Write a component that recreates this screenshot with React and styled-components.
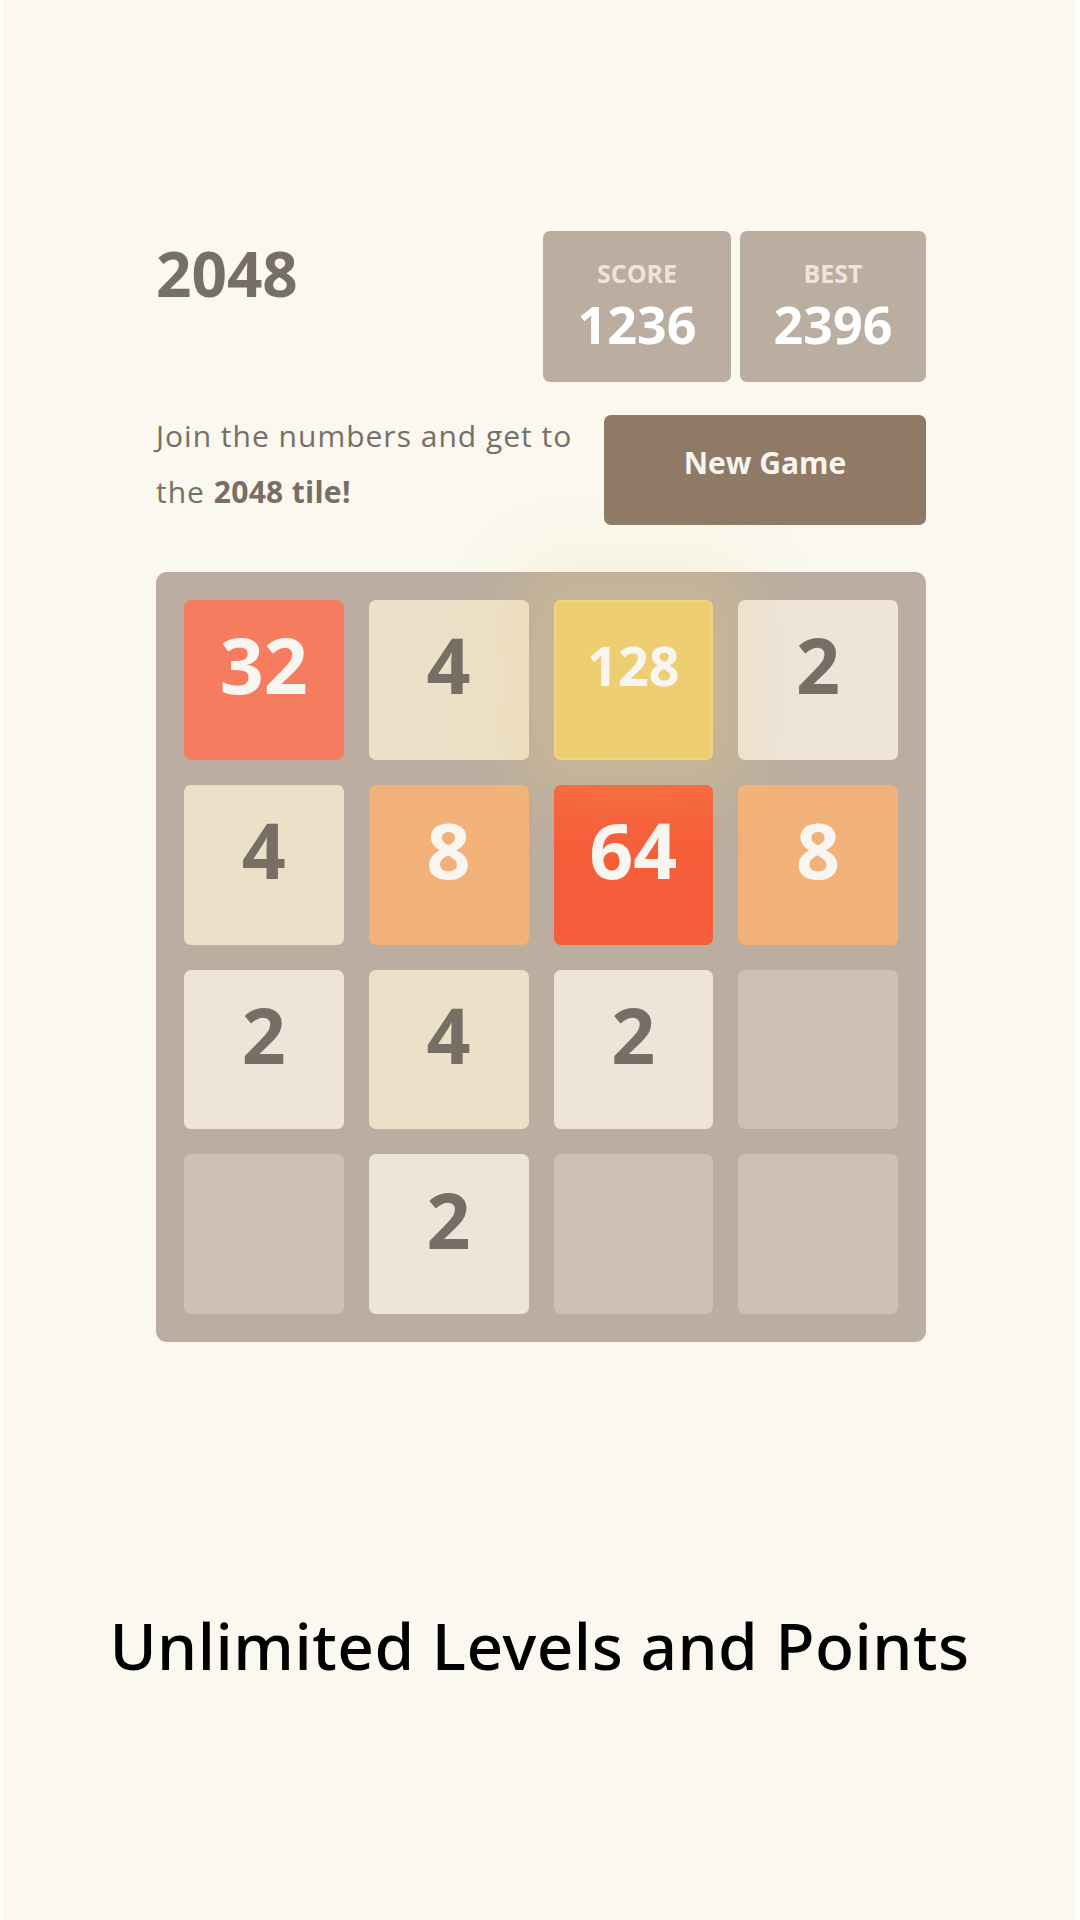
import React from "react";
import styled, { createGlobalStyle } from "styled-components";

const Global = createGlobalStyle`
  html, body { margin: 0; padding: 0; background: #fefefb; }
  body { font-family: "Open Sans", "Noto Sans", sans-serif; }
  * { box-sizing: border-box; }
`;

const Page = styled.div`
  margin: 0 4px 0 3px;
  min-height: 1920px;
  background: #faf8ef;
  padding-top: 231px;
  overflow: hidden;
`;

const Container = styled.div`
  width: 770px;
  margin-left: 153px;
`;

const Header = styled.div`
  display: flex;
  justify-content: space-between;
  align-items: flex-start;
`;

const Title = styled.h1`
  margin: 11px 0 0;
  font-size: 62px;
  line-height: 62px;
  font-weight: 700;
  color: #776e65;
`;

const Scores = styled.div`
  display: flex;
  gap: 9px;
`;

const ScoreBox = styled.div`
  width: ${(p) => p.$w}px;
  height: 151px;
  background: #bbada0;
  border-radius: 7px;
  padding-top: 30px;
  display: flex;
  flex-direction: column;
  align-items: center;
`;

const ScoreLabel = styled.div`
  font-size: 25px;
  line-height: 25px;
  font-weight: 700;
  color: #eee4da;
`;

const ScoreValue = styled.div`
  margin-top: 12px;
  font-size: 52px;
  line-height: 52px;
  font-weight: 700;
  color: #ffffff;
`;

const Intro = styled.div`
  display: flex;
  justify-content: space-between;
  align-items: flex-start;
  margin-top: 26px;
`;

const IntroText = styled.div`
  width: 440px;
  font-size: 30px;
  line-height: 56px;
  color: #776e65;
  letter-spacing: 1px;
`;

const IntroLine = styled.div`
  white-space: nowrap;
`;

const Strong = styled.strong`
  font-weight: 700;
  letter-spacing: 0.3px;
`;

const NewGame = styled.button`
  margin-top: 7px;
  width: 322px;
  height: 110px;
  border: none;
  border-radius: 7px;
  background: #8f7a66;
  color: #f9f6f2;
  font-family: inherit;
  font-size: 30px;
  font-weight: 700;
  padding: 0 0 16px;
  display: flex;
  align-items: center;
  justify-content: center;
`;

const Board = styled.div`
  margin-top: 47px;
  width: 770px;
  height: 770px;
  background: #bbada0;
  border-radius: 11px;
  padding: 28px;
  display: grid;
  grid-template-columns: repeat(4, 1fr);
  grid-template-rows: repeat(4, 1fr);
  gap: 25px;
`;

const tileStyles = {
  0: { bg: "#cdc1b4", fg: "#776e65" },
  2: { bg: "#eee4da", fg: "#776e65" },
  4: { bg: "#ede0c8", fg: "#776e65" },
  8: { bg: "#f2b179", fg: "#f9f6f2" },
  32: { bg: "#f57c5f", fg: "#f9f6f2" },
  64: { bg: "#f65e3b", fg: "#f9f6f2" },
  128: { bg: "#edcf72", fg: "#f9f6f2" },
};

const Tile = styled.div`
  border-radius: 7px;
  background: ${(p) => tileStyles[p.$v].bg};
  color: ${(p) => tileStyles[p.$v].fg};
  font-size: ${(p) => (p.$v >= 100 ? 54 : 77)}px;
  font-weight: 700;
  display: flex;
  align-items: center;
  justify-content: center;
  padding-bottom: 30px;
  position: relative;
  box-shadow: ${(p) =>
    p.$v === 128
      ? "0 0 70px 30px rgba(243, 215, 116, 0.26), inset 0 0 0 2px rgba(255, 255, 255, 0.14)"
      : "none"};
  z-index: ${(p) => (p.$v === 128 ? 1 : 0)};
`;

const Tagline = styled.div`
  margin-top: 272px;
  text-align: center;
  font-family: "Noto Sans", sans-serif;
  font-size: 64px;
  line-height: 64px;
  font-weight: 500;
  color: #000;
  letter-spacing: 0.5px;
`;

const grid = [
  [32, 4, 128, 2],
  [4, 8, 64, 8],
  [2, 4, 2, 0],
  [0, 2, 0, 0],
];

export default function App() {
  return (
    <>
      <Global />
      <Page>
        <Container>
          <Header>
            <Title>2048</Title>
            <Scores>
              <ScoreBox $w={188}>
                <ScoreLabel>SCORE</ScoreLabel>
                <ScoreValue>1236</ScoreValue>
              </ScoreBox>
              <ScoreBox $w={186}>
                <ScoreLabel>BEST</ScoreLabel>
                <ScoreValue>2396</ScoreValue>
              </ScoreBox>
            </Scores>
          </Header>
          <Intro>
            <IntroText>
              <IntroLine>Join the numbers and get to</IntroLine>
              <IntroLine>
                the <Strong>2048 tile!</Strong>
              </IntroLine>
            </IntroText>
            <NewGame>New Game</NewGame>
          </Intro>
          <Board>
            {grid.flat().map((v, i) => (
              <Tile key={i} $v={v}>
                {v ? v : ""}
              </Tile>
            ))}
          </Board>
        </Container>
        <Tagline>Unlimited Levels and Points</Tagline>
      </Page>
    </>
  );
}
